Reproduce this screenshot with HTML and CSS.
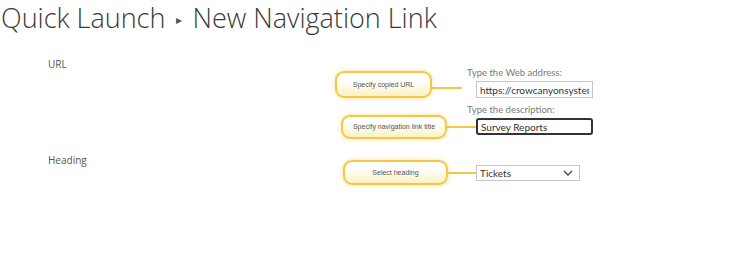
FILE: index.html
```html
<!DOCTYPE html>
<html lang="en">
<head>
    <meta charset="UTF-8">
    <title>New Navigation Link</title>
    <link rel="stylesheet" href="styles.css">
</head>
<body>
    <h1 class="pageTitle">Quick Launch <span class="crumbArrow">&#9656;</span> New Navigation Link</h1>

    <div class="form">
        <section class="formSection">
            <div class="sectionLabel">URL</div>
            <div class="sectionBody">
                <div class="field">
                    <div class="calloutWrap">
                        <div class="callout callout-url">Specify copied URL</div>
                        <div class="connector connector-short"></div>
                    </div>
                    <div class="fieldMain">
                        <div class="hint">Type the Web address:</div>
                        <input class="textBox" type="text" value="https://crowcanyonsystems.com/reports">
                    </div>
                </div>
                <div class="field">
                    <div class="calloutWrap">
                        <div class="callout callout-title">Specify navigation link title</div>
                        <div class="connector"></div>
                    </div>
                    <div class="fieldMain">
                        <div class="hint">Type the description:</div>
                        <input class="textBox focused" type="text" value="Survey Reports">
                    </div>
                </div>
            </div>
        </section>

        <section class="formSection headingSection">
            <div class="sectionLabel">Heading</div>
            <div class="sectionBody">
                <div class="field">
                    <div class="calloutWrap">
                        <div class="callout callout-heading">Select heading</div>
                        <div class="connector"></div>
                    </div>
                    <div class="fieldMain">
                        <div class="selectBox">
                            <span>Tickets</span>
                            <svg width="10" height="6" viewBox="0 0 10 6"><path d="M1 1 L5 5 L9 1" fill="none" stroke="#444" stroke-width="1.3"/></svg>
                        </div>
                    </div>
                </div>
            </div>
        </section>
    </div>
</body>
</html>
```

FILE: styles.css
```css
body {
    margin: 0;
    background: #fff;
    font-family: 'Open Sans', 'Noto Sans', sans-serif;
    color: #444;
}
.pageTitle {
    margin: 0;
    padding: 0 0 0 1px;
    font-size: 27px;
    font-weight: 300;
    line-height: 36px;
    color: #3a3a3a;
    white-space: nowrap;
}
.crumbArrow {
    font-size: 12px;
    vertical-align: 4px;
    color: #555;
    margin: 0 3px 0 4px;
}
.form {
    padding: 23px 0 40px 48px;
}
.formSection {
    display: flex;
}
.headingSection {
    margin-top: 24px;
}
.sectionLabel {
    width: 287px;
    margin-top: -4px;
    font-size: 10px;
    color: #555;
}
.headingSection .sectionLabel {
    margin-top: -6px;
}
.sectionBody {
    display: flex;
    flex-direction: column;
}
.field {
    display: flex;
    align-items: flex-end;
    margin-top: 5px;
}
.calloutWrap {
    width: 141px;
    height: 17px;
    display: flex;
    align-items: center;
}
.callout {
    flex: none;
    height: 24px;
    display: flex;
    align-items: center;
    justify-content: center;
    box-sizing: border-box;
    border: 2px solid #f6c744;
    border-radius: 9px;
    background: linear-gradient(#fff 30%, #fdf1c4);
    box-shadow: 0 0 4px rgba(245, 195, 60, 0.55);
    font-family: 'Liberation Sans', Arial, sans-serif;
    font-size: 7px;
    color: #555;
    white-space: nowrap;
}
.callout-url {
    width: 97px;
    height: 27px;
    margin-bottom: 10px;
}
.callout-title {
    width: 106px;
    margin-left: 6px;
}
.callout-heading {
    width: 105px;
    margin-left: 8px;
    height: 25px;
}
.connector {
    flex: 1;
    height: 2px;
    background: #f6c744;
}
.connector-short {
    margin: 0 14px 4px 0;
}
.fieldMain {
    display: flex;
    flex-direction: column;
}
.hint {
    font-family: 'Lato', sans-serif;
    font-size: 9.5px;
    color: #7a7a7a;
    margin: 0 0 2px -9px;
    line-height: 13px;
}
.textBox {
    width: 117px;
    height: 17px;
    box-sizing: border-box;
    margin: 0;
    padding: 0 3px;
    border: 1px solid #c6c6c6;
    font-family: 'Lato', sans-serif;
    font-size: 10px;
    color: #333;
    outline: none;
}
.textBox.focused {
    border: 2px solid #333;
    border-radius: 3px;
}
.selectBox {
    width: 104px;
    height: 16px;
    box-sizing: border-box;
    border: 1px solid #c6c6c6;
    display: flex;
    align-items: center;
    justify-content: space-between;
    padding: 0 6px 0 3px;
    font-family: 'Lato', sans-serif;
    font-size: 10px;
    color: #333;
}
```
